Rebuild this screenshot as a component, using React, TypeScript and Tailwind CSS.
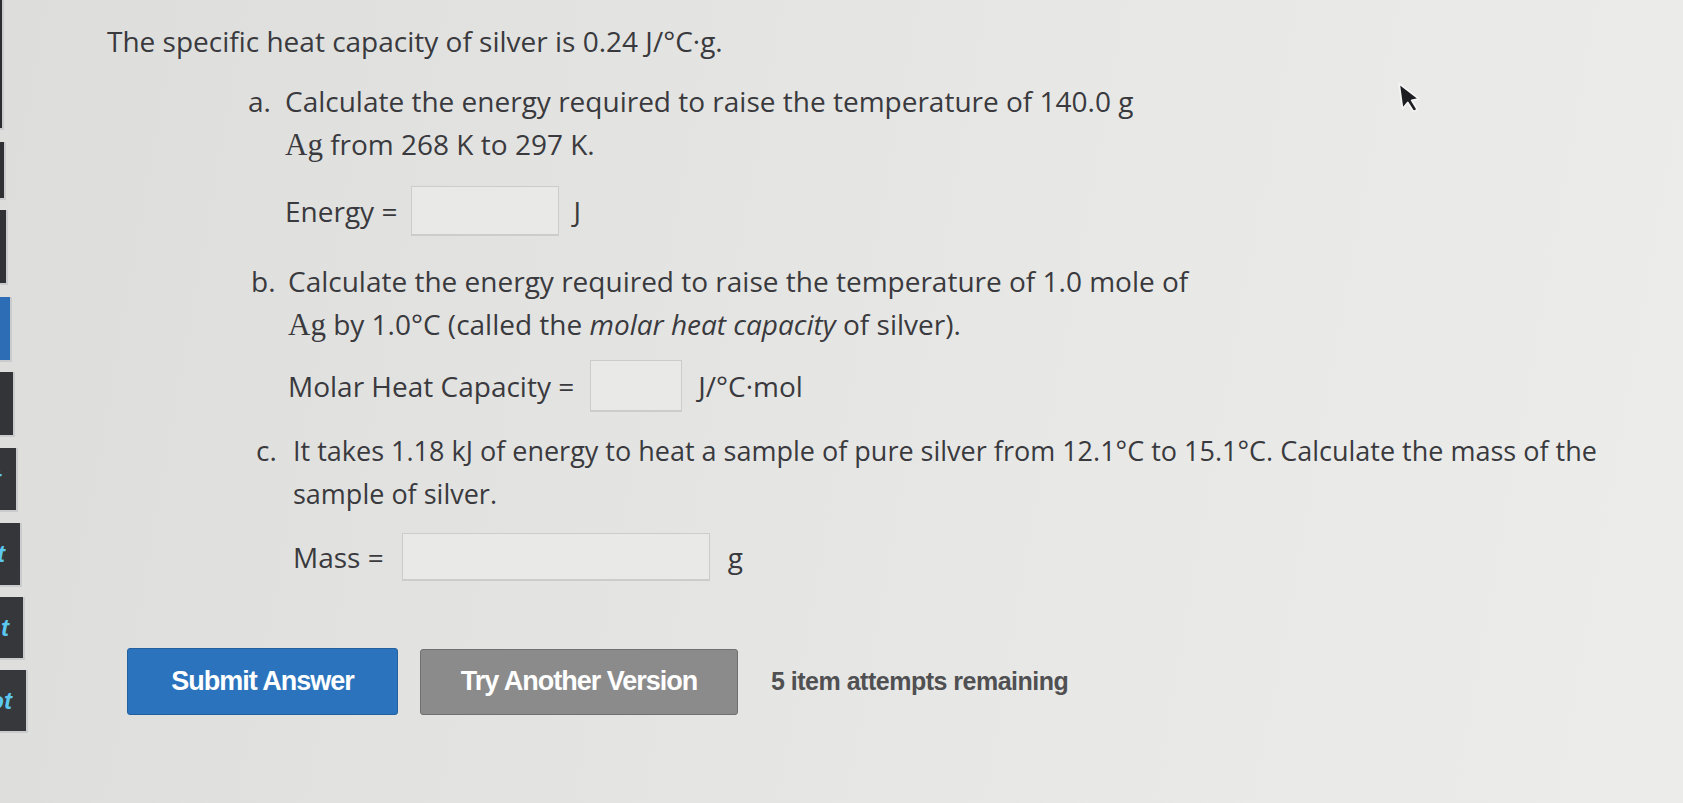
import React from 'react';

// left edge of the window: a partly visible sidebar of dark tiles
const tiles = [
  { cls: 'h-[130px] w-[4px] bg-[#2a2c2f]', t: '' },
  { cls: 'mt-[12px] h-[58px] w-[6px] bg-[#2e3033]', t: '' },
  { cls: 'mt-[10px] h-[75px] w-[8px] bg-[#303235]', t: '' },
  { cls: 'mt-[12px] h-[65px] w-[12px] bg-[#2c6db5]', t: '' },
  { cls: 'mt-[10px] h-[65px] w-[15px] bg-[#323437]', t: '' },
  { cls: 'mt-[11px] h-[64px] w-[18px] bg-[#343639] pr-[15px]', t: 't' },
  { cls: 'mt-[11px] h-[64px] w-[22px] bg-[#343639] pr-[15px]', t: 't' },
  { cls: 'mt-[10px] h-[63px] w-[25px] bg-[#35373a] pr-[14px]', t: 't' },
  { cls: 'mt-[10px] h-[63px] w-[28px] bg-[#36383b] pr-[14px]', t: 'ot' },
];

function SideStrip() {
  return (
    <div className="flex w-[30px] shrink-0 flex-col">
      {tiles.map((tile, i) => (
        <div
          key={i}
          className={`${tile.cls} flex items-center justify-end overflow-hidden border-r-[2px] border-b-[2px] border-[#c9cbcc]`}
        >
          {tile.t && (
            <span className="font-['Liberation_Sans',sans-serif] text-[24px] font-bold italic leading-none text-[#5cc8f2]">
              {tile.t}
            </span>
          )}
        </div>
      ))}
    </div>
  );
}

function Ag() {
  return <span className="font-['Liberation_Serif',serif] text-[31px]">Ag</span>;
}

function AnswerBox({ w, h }: { w: string; h: string }) {
  return (
    <span
      className={`${w} ${h} inline-block border border-[#cbcdcb] border-b-[2px] bg-[#e9eae8]`}
    />
  );
}

function Item({ marker, className, children }: { marker: string; className?: string; children: React.ReactNode }) {
  return (
    <li className={`flex ${className ?? ''}`}>
      <span className="w-[37px] shrink-0">{marker}</span>
      <div className="flex-1">{children}</div>
    </li>
  );
}

function Cursor() {
  return (
    <svg
      className="absolute left-[1397px] top-[82px]"
      width="24"
      height="36"
      viewBox="0 0 24 36"
    >
      <path
        d="M2 1.5 L2 27 L8 21.5 L12.5 31.5 L16.5 29.8 L12.2 20 L19.5 19.5 Z"
        fill="#1d1e22"
        stroke="#f4f4f4"
        strokeWidth="1.8"
        strokeLinejoin="round"
        transform="rotate(-8 2 1.5)"
      />
    </svg>
  );
}

export default function App() {
  return (
    <div className="relative flex h-[803px] w-full overflow-hidden bg-[linear-gradient(100deg,#dddedc_0%,#e3e4e2_35%,#e8e9e7_65%,#ecedeb_100%)] font-['Open_Sans',sans-serif] text-[28px] leading-[43px] text-[#3a3a3e]">
      <SideStrip />

      <main className="flex-1 pl-[77px] pt-[20px]">
        <p>The specific heat capacity of silver is 0.24 J/°C·g.</p>

        <ol className="ml-[141px] mt-[17px]">
          <Item marker="a.">
            <p>
              Calculate the energy required to raise the temperature of 140.0 g
              <br />
              <Ag /> from 268 K to 297 K.
            </p>
            <div className="mt-[20px] flex h-[50px] items-center gap-[14px]">
              <span>Energy =</span>
              <AnswerBox w="w-[148px]" h="h-[50px]" />
              <span>J</span>
            </div>
          </Item>

          <Item marker="b." className="mt-[24px] ml-[3px]">
            <p>
              Calculate the energy required to raise the temperature of 1.0 mole of
              <br />
              <Ag /> by 1.0°C (called the <em>molar heat capacity</em> of silver).
            </p>
            <div className="mt-[14px] flex h-[52px] items-center gap-[16px]">
              <span>Molar Heat Capacity =</span>
              <AnswerBox w="w-[92px]" h="h-[52px]" />
              <span>J/°C·mol</span>
            </div>
          </Item>

          <Item marker="c." className="mt-[17px] ml-[8px]">
            <p className="text-[27px]">
              It takes 1.18 kJ of energy to heat a sample of pure silver from 12.1°C to 15.1°C. Calculate the mass of the
              <br />
              sample of silver.
            </p>
            <div className="mt-[18px] flex h-[48px] items-center gap-[18px]">
              <span>Mass =</span>
              <AnswerBox w="w-[308px]" h="h-[48px]" />
              <span>g</span>
            </div>
          </Item>
        </ol>

        <div className="ml-[20px] mt-[67px] flex items-center font-['Liberation_Sans',sans-serif] font-bold">
          <button className="h-[67px] w-[271px] rounded-[3px] border border-[#245f9e] bg-[#2b74bd] text-[27px] tracking-[-1px] text-white">
            Submit Answer
          </button>
          <button className="ml-[22px] h-[66px] w-[318px] rounded-[3px] border border-[#707070] bg-[#8b8b8b] text-[27px] tracking-[-1px] text-white">
            Try Another Version
          </button>
          <span className="ml-[33px] text-[25px] tracking-[-0.5px] text-[#505052]">5 item attempts remaining</span>
        </div>
      </main>

      <Cursor />
    </div>
  );
}
